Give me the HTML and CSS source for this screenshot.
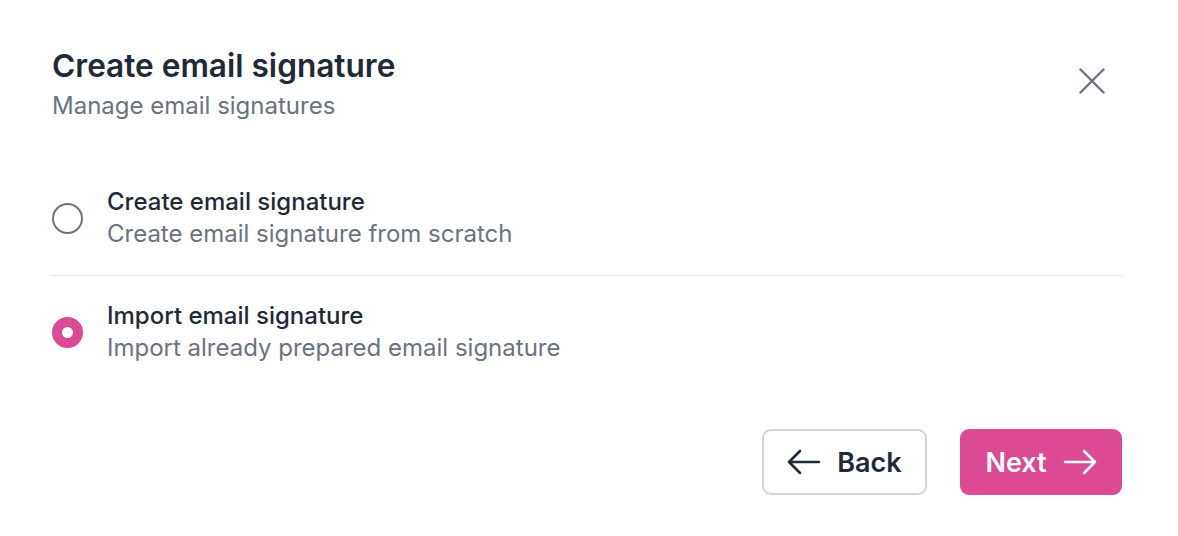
FILE: index.html
```html
<!DOCTYPE html>
<html>
<head>
<meta charset="utf-8">
<link rel="stylesheet" href="styles.css">
</head>
<body>
<div class="dialog">
  <div class="header">
    <div class="heading">
      <h1 class="title">Create email signature</h1>
      <p class="subtitle">Manage email signatures</p>
    </div>
    <button class="close" aria-label="Close">
      <svg width="26" height="26" viewBox="0 0 26 26" fill="none" stroke="currentColor" stroke-width="2.4" stroke-linecap="round"><path d="M1.5 1.5l23 23M24.5 1.5l-23 23"/></svg>
    </button>
  </div>
  <div class="options">
    <label class="option">
      <span class="radio"></span>
      <span class="option-text">
        <span class="option-title">Create email signature</span>
        <span class="option-desc">Create email signature from scratch</span>
      </span>
    </label>
    <div class="divider"></div>
    <label class="option">
      <span class="radio checked"></span>
      <span class="option-text">
        <span class="option-title">Import email signature</span>
        <span class="option-desc">Import already prepared email signature</span>
      </span>
    </label>
  </div>
  <div class="footer">
    <button class="btn btn-back">
      <svg width="34" height="26" viewBox="0 0 34 26" fill="none" stroke="currentColor" stroke-width="2.6" stroke-linecap="round" stroke-linejoin="round"><path d="M32 13H2M13 2L2 13l11 11"/></svg>
      <span>Back</span>
    </button>
    <button class="btn btn-next">
      <span>Next</span>
      <svg width="34" height="26" viewBox="0 0 34 26" fill="none" stroke="currentColor" stroke-width="2.6" stroke-linecap="round" stroke-linejoin="round"><path d="M2 13h30M21 2l11 11-11 11"/></svg>
    </button>
  </div>
</div>
</body>
</html>
```
FILE: styles.css
```css
* { box-sizing: border-box; }
html, body { margin: 0; background: #fff; }
body { font-family: Inter, "Noto Sans", sans-serif; color: #1f2937; }
.dialog { width: 1178px; padding: 46px 56px 0 52px; }
.header { display: flex; justify-content: space-between; align-items: flex-start; }
.title { margin: 0; font-size: 31.6px; font-weight: 600; line-height: 40px; color: #1f2937; }
.subtitle { margin: 0; font-size: 24px; line-height: 40px; color: #6b7280; }
.close { background: none; border: 0; padding: 0; margin-top: 22px; margin-right: 17px; color: #6b7280; display: flex; }
.options { margin-top: 60px; }
.option { display: flex; align-items: center; gap: 24px; padding: 0; }
.radio { width: 31px; height: 31px; border-radius: 50%; border: 2px solid #6b7280; flex: none; }
.radio.checked { border: 10px solid #db4a93; background: #fff; }
.option-text { display: flex; flex-direction: column; }
.option-title { font-size: 24px; font-weight: 500; line-height: 32px; color: #1f2937; }
.option-desc { font-size: 24px; line-height: 32px; color: #6b7280; }
.divider { height: 1px; background: #e5e7eb; margin: 25px 0 24px; }
.footer { display: flex; justify-content: flex-end; gap: 33px; margin-top: 65px; }
.btn { display: flex; align-items: center; justify-content: center; gap: 16px; height: 66px; border-radius: 9px; font-family: Inter, sans-serif; font-size: 27px; font-weight: 600; padding: 0; cursor: pointer; }
.btn-back { background: #fff; border: 2px solid #d1d5db; color: #1f2937; width: 165px; }
.btn-next { background: #db4a93; border: 0; color: #fff; width: 162px; }
```
